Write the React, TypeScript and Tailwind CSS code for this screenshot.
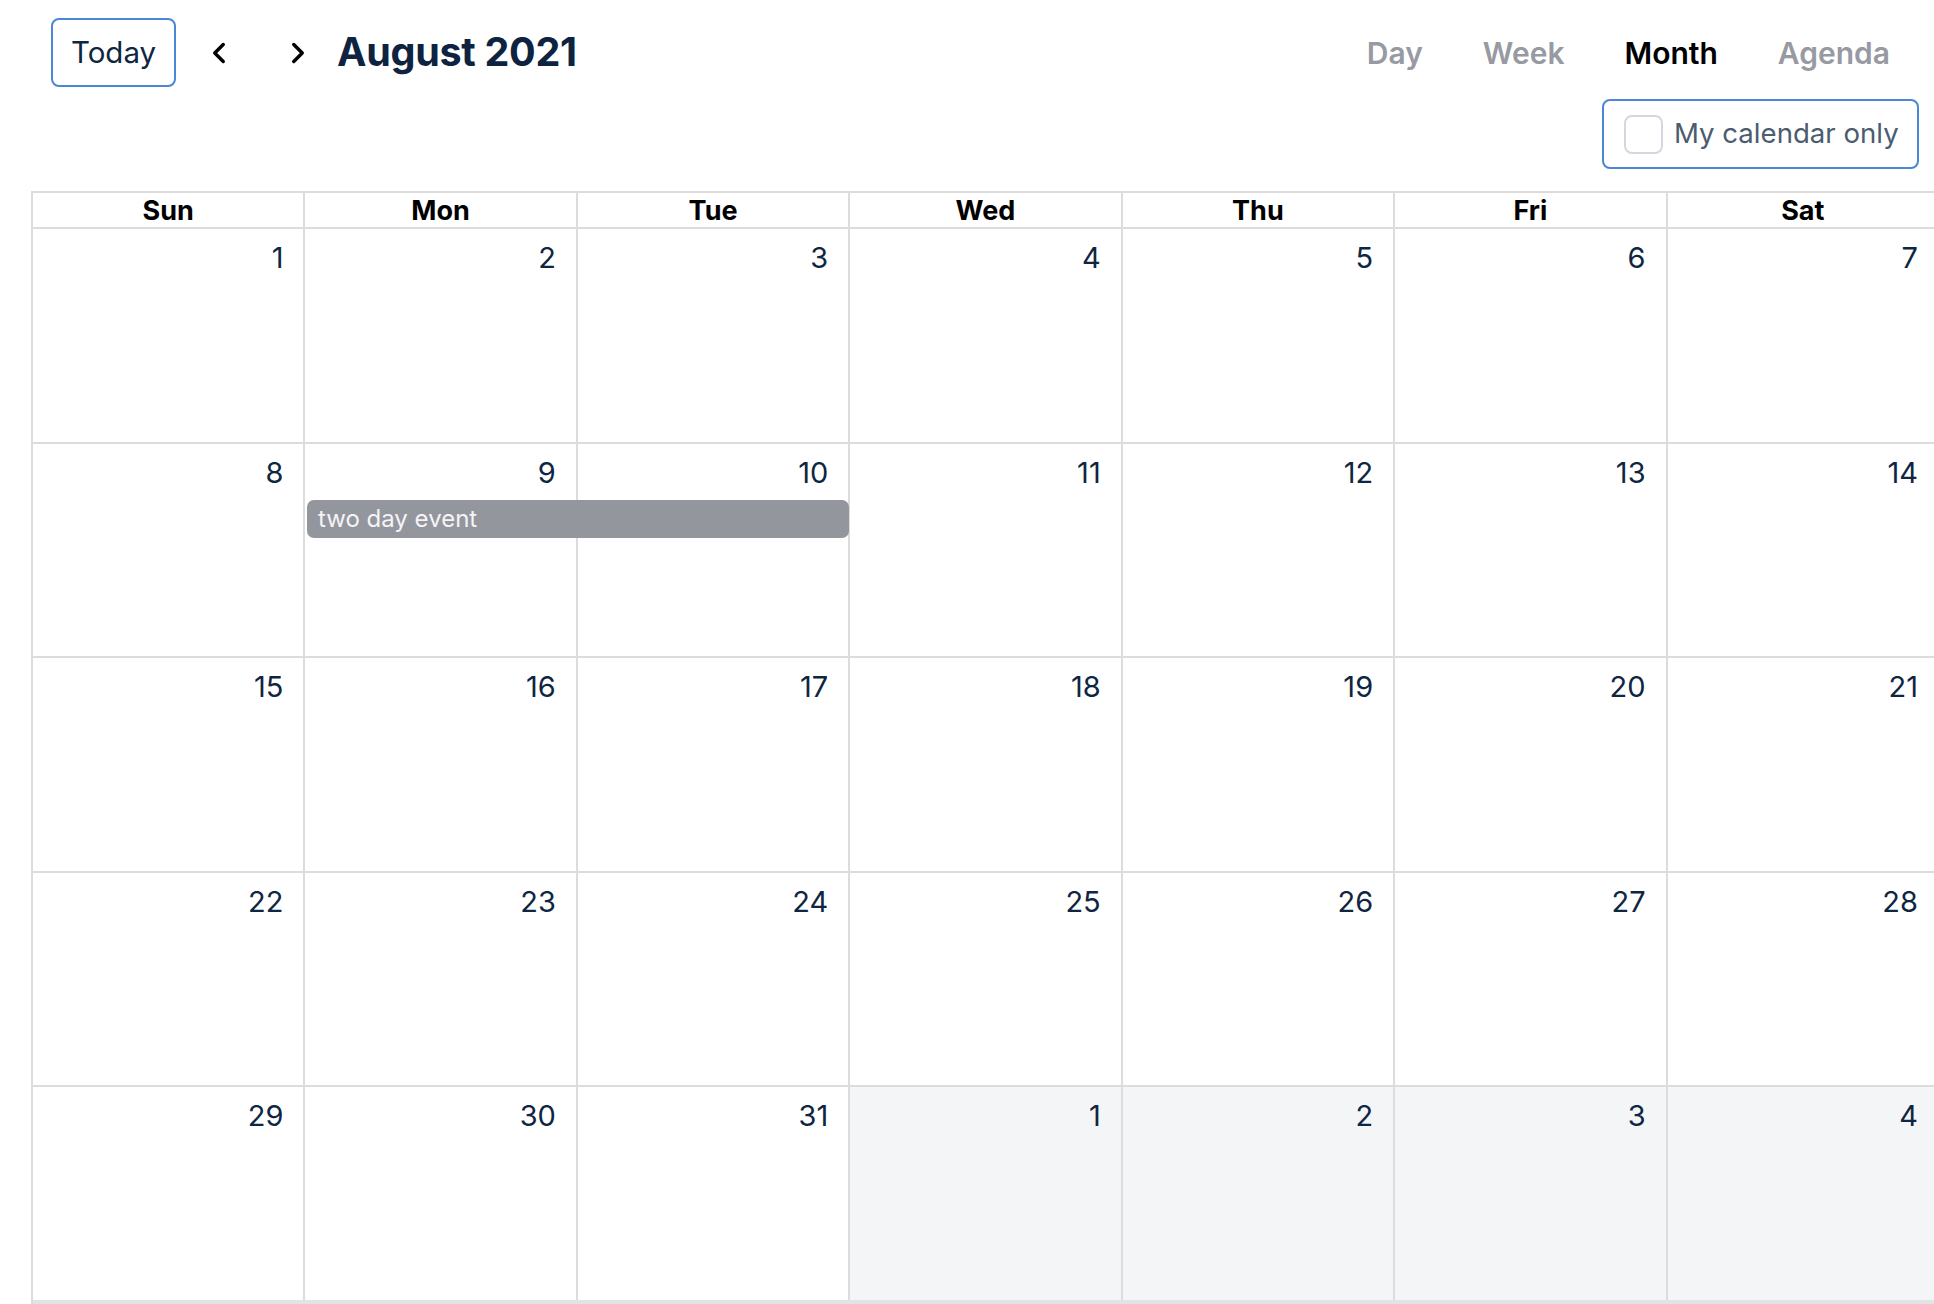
import { ChevronLeft, ChevronRight } from 'lucide-react';

const weekDays = ['Sun', 'Mon', 'Tue', 'Wed', 'Thu', 'Fri', 'Sat'];

const weeks = [
	[1, 2, 3, 4, 5, 6, 7],
	[8, 9, 10, 11, 12, 13, 14],
	[15, 16, 17, 18, 19, 20, 21],
	[22, 23, 24, 25, 26, 27, 28],
	[29, 30, 31, 1, 2, 3, 4],
];

const views = ['Day', 'Week', 'Month', 'Agenda'];

export default function App() {
	return (
		<div
			className="w-[1934px] h-[1304px] overflow-hidden bg-white text-[#0f2642]"
			style={{ fontFamily: 'Inter, "Noto Sans", sans-serif' }}
		>
			{/* toolbar */}
			<div className="flex justify-between pl-[51px] pr-[15px] pt-[18px] h-[191px]">
				<div className="flex items-start">
					<button className="w-[125px] h-[69px] rounded-[8px] border-2 border-[#4a87d6] text-[29.5px] text-[#0f2642]">
						Today
					</button>
					<div className="flex items-center h-[70px] ml-[26px]">
						<ChevronLeft className="size-[34px] text-black" strokeWidth={2.4} />
						<ChevronRight className="size-[34px] text-black ml-[45px]" strokeWidth={2.4} />
						<h1 className="ml-[22px] text-[39.5px] font-bold tracking-[-0.3px] text-[#0d2340]">
							August 2021
						</h1>
					</div>
				</div>
				<div className="flex flex-col items-end">
					<div className="flex items-center h-[70px] gap-[60px] pr-[29px]">
						{views.map(v => (
							<span
								key={v}
								className={
									v === 'Month'
										? 'text-[30px] font-semibold text-black'
										: 'text-[30px] font-semibold text-[#979aa3]'
								}
							>
								{v}
							</span>
						))}
					</div>
					<label className="mt-[11px] flex items-center w-[317px] h-[70px] rounded-[8px] border-2 border-[#4a87d6] pl-[20px]">
						<span className="size-[39px] rounded-[8px] border-2 border-[#d4d8de] bg-white" />
						<span className="ml-[11px] text-[27.6px] text-[#4b5c70]">My calendar only</span>
					</label>
				</div>
			</div>

			{/* month grid */}
			<div className="ml-[31px] w-[1909px] border-l-2 border-[#dcdcdc]">
				<div className="grid grid-cols-7 border-t-2 border-[#dcdcdc]">
					{weekDays.map(d => (
						<div
							key={d}
							className="h-[34px] border-r-2 border-[#dcdcdc] text-center text-[27px] font-bold leading-[36px] text-black"
						>
							{d}
						</div>
					))}
				</div>
				{weeks.map((week, wi) => (
					<div
						key={wi}
						className="relative grid grid-cols-7 h-[214.6px] border-t-2 border-[#dcdcdc]"
					>
						{week.map((day, di) => {
							const outside = wi === 4 && di > 2;
							return (
								<div
									key={di}
									className={
										outside
											? 'border-r-2 border-[#dcdcdc] bg-[#f4f5f7] pr-[20px] pt-[11px] text-right'
											: 'border-r-2 border-[#dcdcdc] pr-[20px] pt-[11px] text-right'
									}
								>
									<span className="text-[29px] leading-[36px]">{day}</span>
								</div>
							);
						})}
						{wi === 1 && (
							<div className="absolute left-[274px] top-[56px] w-[542px] h-[38px] rounded-[7px] bg-[#94969e] pl-[11px] text-[24px] leading-[38px] text-[#f4f4f6]">
								two day event
							</div>
						)}
					</div>
				))}
				<div className="h-[4px] bg-[#e2e3e6]" />
			</div>
		</div>
	);
}
